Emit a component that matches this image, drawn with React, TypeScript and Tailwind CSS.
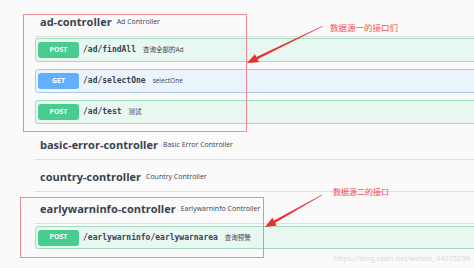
import React from "react"

type Op = {
	method: "POST" | "GET"
	path: string
	desc: string
}

const sans = { fontFamily: '"Open Sans", "Noto Sans CJK SC", sans-serif' }
const mono = { fontFamily: '"DejaVu Sans Mono", "Liberation Mono", monospace' }
const cjk = { fontFamily: '"Noto Sans CJK SC", "Noto Sans", sans-serif' }

const OpRow = ({ op, h = "h-[24px]" }: { op: Op; h?: string }) => {
	const isGet = op.method === "GET"
	return (
		<div
			className={`flex items-center ${h} px-[2px] rounded-[3px] border ${
				isGet
					? "bg-[#ebf3fc] border-[#aec8ec]"
					: "bg-[#e8f7f0] border-[#9fdcc0]"
			}`}
		>
			<span
				className={`w-[41px] h-[16px] flex items-center justify-center rounded-[3px] text-white text-[7px] font-bold ${
					isGet ? "bg-[#61affe]" : "bg-[#49cc90]"
				}`}
				style={sans}
			>
				{op.method}
			</span>
			<span
				className="ml-[4px] text-[8px] font-bold text-[#3b4151]"
				style={mono}
			>
				{op.path}
			</span>
			<span className="ml-[7px] text-[6.5px] text-[#3b4151]" style={sans}>
				{op.desc}
			</span>
		</div>
	)
}

const Heading = ({ name, desc }: { name: string; desc: string }) => (
	<div className="h-[32px] pt-[4px] pl-[5px] flex items-center border-b border-[#dedede]">
		<span className="text-[11px] font-bold text-[#3b4151]" style={sans}>
			{name}
		</span>
		<span className="ml-[5px] text-[7px] text-[#3b4151]" style={sans}>
			{desc}
		</span>
	</div>
)

const adOps: Op[] = [
	{ method: "POST", path: "/ad/findAll", desc: "查询全部的Ad" },
	{ method: "GET", path: "/ad/selectOne", desc: "selectOne" },
	{ method: "POST", path: "/ad/test", desc: "测试" }
]

const App = () => {
	return (
		<div className="relative w-[474px] h-[268px] overflow-hidden bg-[#fafafa]">
			<div className="w-[445px] ml-[35px] pt-[5px]">
				<Heading name="ad-controller" desc="Ad Controller" />
				<div className="mt-[1px] flex flex-col gap-[7px]">
					{adOps.map(op => (
						<OpRow key={op.path} op={op} />
					))}
				</div>

				<div className="mt-[4px]">
					<Heading name="basic-error-controller" desc="Basic Error Controller" />
					<Heading name="country-controller" desc="Country Controller" />
					<Heading
						name="earlywarninfo-controller"
						desc="Earlywarninfo Controller"
					/>
				</div>
				<div className="mt-[2px]">
					<OpRow
						h="h-[23px]"
						op={{
							method: "POST",
							path: "/earlywarninfo/earlywarnarea",
							desc: "查询预警"
						}}
					/>
				</div>
			</div>

			{/* annotations */}
			<div className="absolute left-[23px] top-[14px] w-[224px] h-[118px] border border-[#f08c8c] pointer-events-none" />
			<div className="absolute left-[20px] top-[197px] w-[244px] h-[61px] border border-[#f08c8c] pointer-events-none" />

			<svg
				className="absolute inset-0 pointer-events-none"
				width="474"
				height="268"
				viewBox="0 0 474 268"
			>
				<polygon
					fill="#e8302c"
					points="323.1,26.2 257.45,59.32 258.9,62.2 247,63 254.9,54.2 256.35,57.08 322.9,25.8"
				/>
				<polygon
					fill="#e8302c"
					points="322.1,195.2 275.2,222.7 276.8,225.5 265,227 272.4,217.7 274.0,220.5 321.9,194.8"
				/>
			</svg>

			<span
				className="absolute left-[330px] top-[21px] text-[8.5px] leading-[12px] text-[#f0504f]"
				style={cjk}
			>
				数据源一的接口们
			</span>
			<span
				className="absolute left-[333px] top-[186px] text-[8px] leading-[12px] text-[#f0504f]"
				style={cjk}
			>
				数据源二的接口
			</span>

			<span
				className="absolute right-[4px] top-[253px] text-[7.5px] leading-[10px] text-[#d9d9d9]"
				style={{ fontFamily: '"Noto Sans", sans-serif' }}
			>
				https://blog.csdn.net/weixin_44075299
			</span>
		</div>
	)
}

export default App
